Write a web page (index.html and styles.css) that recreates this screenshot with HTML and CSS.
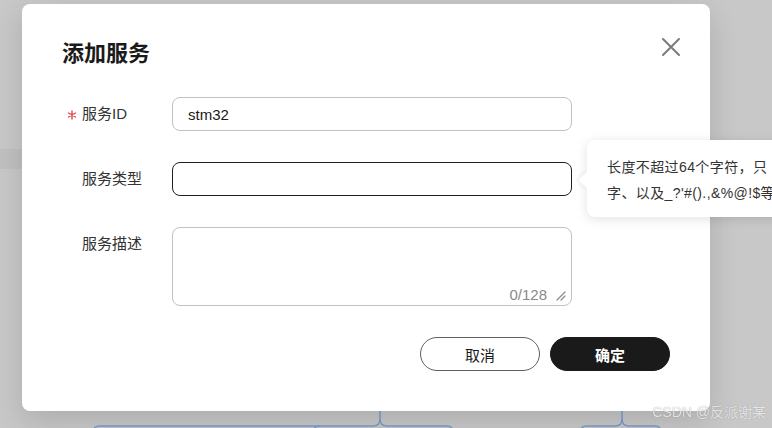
FILE: index.html
```html
<!DOCTYPE html>
<html lang="zh-CN">
<head>
<meta charset="utf-8">
<title>添加服务</title>
<link rel="stylesheet" href="styles.css">
</head>
<body>
<div class="page">
  <div class="band"></div>
  <svg class="tree" width="772" height="428" viewBox="0 0 772 428" fill="none" stroke="#7b9dcc" stroke-width="1.5">
    <path d="M380 405 V419 Q380 426 373 426 H100 Q93 426 93 433"/>
    <path d="M380 419 Q380 426 387 426 H447 Q453 426 453 433"/>
    <path d="M320 426 Q313 426 313 433"/>
    <path d="M622 405 V419 Q622 426 615 426 H587 Q580 426 580 433"/>
    <path d="M622 419 Q622 426 629 426 H655 Q661 426 661 433"/>
  </svg>
</div>

<div class="dialog">
  <h2 class="title">添加服务</h2>
  <button class="close" type="button" aria-label="关闭">
    <svg width="20" height="20" viewBox="0 0 20 20" fill="none" stroke="#7a7a7a" stroke-width="2" stroke-linecap="round">
      <path d="M2 2 L18 18 M18 2 L2 18"/>
    </svg>
  </button>

  <div class="form">
    <div class="row">
      <div class="label">
        <svg class="star" width="10" height="10" viewBox="0 0 10 10" stroke="#e5484d" stroke-width="1.4" stroke-linecap="round">
          <path d="M5 1 V9 M1.5 3 L8.5 7 M8.5 3 L1.5 7"/>
        </svg>
        服务ID
      </div>
      <div class="field">
        <input class="input" type="text" value="stm32">
      </div>
    </div>

    <div class="row">
      <div class="label">服务类型</div>
      <div class="field">
        <input class="input focused" type="text" value="">
        <div class="tooltip">
          <span class="tip-arrow"></span>
          <div class="tip-line">长度不超过64个字符，只</div>
          <div class="tip-line">字、以及_?'#().,&amp;%@!$等</div>
        </div>
      </div>
    </div>

    <div class="row">
      <div class="label">服务描述</div>
      <div class="field area-wrap">
        <textarea class="textarea"></textarea>
        <span class="counter">0/128</span>
        <svg class="grip" width="10" height="10" viewBox="0 0 10 10" stroke="#8a8a8a" stroke-width="1.2" stroke-linecap="round">
          <path d="M1 9 L9 1 M5 9 L9 5"/>
        </svg>
      </div>
    </div>
  </div>

  <div class="actions">
    <button class="btn" type="button">取消</button>
    <button class="btn primary" type="button">确定</button>
  </div>
</div>

<div class="watermark">CSDN @反派谢某</div>
</body>
</html>
```

FILE: styles.css
```css
* { box-sizing: border-box; }

html, body {
  margin: 0;
  padding: 0;
  width: 772px;
  height: 428px;
  overflow: hidden;
}

body {
  background: #c8c8c8;
  font-family: "Liberation Sans", "Noto Sans CJK SC", sans-serif;
  color: #1a1a1a;
  position: relative;
}

.page {
  width: 772px;
  height: 428px;
  padding-top: 149px;
}

.band {
  height: 20px;
  background: #c0c0c0;
}

.tree {
  position: absolute;
  left: 0;
  top: 0;
}

.dialog {
  position: absolute;
  left: 22px;
  top: 4px;
  width: 688px;
  height: 407px;
  background: #fff;
  border-radius: 8px;
  padding: 35px 40px 40px;
  box-shadow: 0 10px 30px rgba(0, 0, 0, 0.14);
  display: flex;
  flex-direction: column;
}

.title {
  margin: 0 0 28px;
  font-size: 22px;
  line-height: 30px;
  font-weight: 700;
  color: #1a1a1a;
}

.close {
  position: absolute;
  top: 33px;
  right: 29px;
  width: 20px;
  height: 20px;
  padding: 0;
  border: 0;
  background: none;
  display: flex;
}

.form {
  display: flex;
  flex-direction: column;
  gap: 31px;
}

.row {
  display: flex;
  align-items: flex-start;
}

.label {
  position: relative;
  width: 110px;
  flex: none;
  padding-left: 20px;
  font-size: 15px;
  line-height: 34px;
  color: #333;
}

.star {
  position: absolute;
  left: 5px;
  top: 13px;
}

.field {
  position: relative;
  width: 400px;
}

.input {
  display: block;
  width: 400px;
  height: 34px;
  border: 1px solid #c2c2c2;
  border-radius: 8px;
  padding: 0 15px;
  font-family: inherit;
  font-size: 15px;
  color: #1a1a1a;
  background: #fff;
  outline: none;
}

.input.focused {
  border-color: #1f1f1f;
}

.textarea {
  display: block;
  width: 400px;
  height: 79px;
  border: 1px solid #c2c2c2;
  border-radius: 8px;
  padding: 8px 15px;
  font-family: inherit;
  font-size: 15px;
  resize: none;
  outline: none;
  background: #fff;
}

.counter {
  position: absolute;
  right: 25px;
  bottom: 2px;
  font-size: 15px;
  line-height: 18px;
  color: #8a8a8a;
}

.grip {
  position: absolute;
  right: 6px;
  bottom: 5px;
}

.actions {
  margin-top: 31px;
  display: flex;
  justify-content: flex-end;
  gap: 10px;
}

.btn {
  width: 120px;
  height: 34px;
  border-radius: 17px;
  border: 1px solid #5f5f5f;
  background: #fff;
  color: #1a1a1a;
  font-family: inherit;
  font-size: 15px;
  padding: 0;
}

.btn.primary {
  background: #1a1a1a;
  border-color: #1a1a1a;
  color: #fff;
  font-weight: 700;
}

.tooltip {
  position: absolute;
  left: 415px;
  top: -22px;
  width: 300px;
  height: 77px;
  background: #fff;
  border-radius: 8px;
  padding: 14px 20px 11px;
  box-shadow: 0 2px 12px rgba(0, 0, 0, 0.12);
  font-size: 14px;
  line-height: 26px;
  letter-spacing: 0.4px;
  color: #333;
  z-index: 2;
}

.tip-line {
  white-space: nowrap;
}

.tip-arrow {
  position: absolute;
  left: -6px;
  top: 34px;
  width: 12px;
  height: 12px;
  background: #fff;
  transform: rotate(45deg);
  box-shadow: -2px 2px 4px rgba(0, 0, 0, 0.05);
}

.watermark {
  position: absolute;
  right: 6px;
  bottom: 7px;
  font-size: 14px;
  line-height: 18px;
  color: rgba(255, 255, 255, 0.8);
  text-shadow: 0 0 1px rgba(0, 0, 0, 0.35);
}
```
